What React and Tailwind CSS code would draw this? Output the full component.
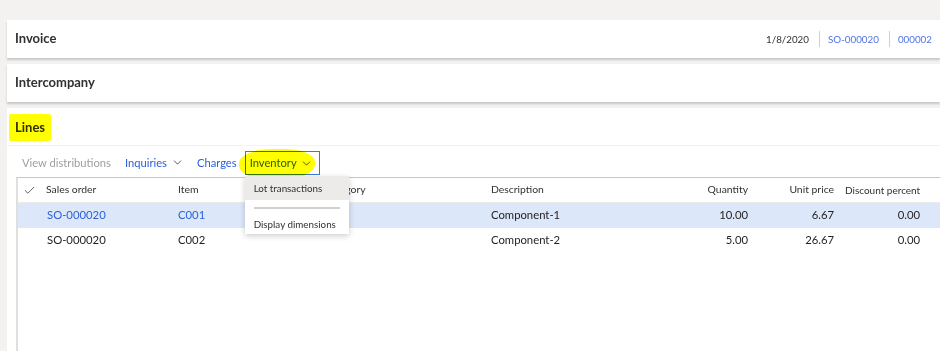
import React from 'react';
import { Check, ChevronDown } from 'lucide-react';

const font = { fontFamily: '"Segoe UI", Lato, sans-serif' };

const rows = [
  { so: 'SO-000020', item: 'C001', desc: 'Component-1', qty: '10.00', price: '6.67', disc: '0.00', selected: true },
  { so: 'SO-000020', item: 'C002', desc: 'Component-2', qty: '5.00', price: '26.67', disc: '0.00' },
];

const Card = ({ title, children }) => (
  <div className="ml-[7px] h-[38px] bg-white shadow-[0_2px_2px_rgba(0,0,0,0.18)] flex items-center justify-between pl-[8px] pr-[8px]">
    <span className="text-[13px] font-bold text-[#323130]">{title}</span>
    {children}
  </div>
);

const App = () => {
  return (
    <div className="w-[940px] h-[351px] overflow-hidden bg-[#f3f2f1] pt-[20px] flex flex-col gap-[6px] text-[#201f1e] whitespace-nowrap" style={font}>
      <Card title="Invoice">
        <div className="flex items-center text-[9.8px]">
          <span className="text-[#323130]">1/8/2020</span>
          <span className="w-px h-[16px] bg-[#d2d0ce] ml-[10px] mr-[8px]"></span>
          <span className="text-[#4f72e3]">SO-000020</span>
          <span className="w-px h-[16px] bg-[#d2d0ce] ml-[10px] mr-[8px]"></span>
          <span className="text-[#4f72e3]">000002</span>
        </div>
      </Card>
      <Card title="Intercompany" />

      <div className="ml-[7px] flex-1 bg-white flex flex-col">
        <div className="h-[38px] flex items-center pl-[8px] pt-[3px] border-b border-[#f3f2f1]">
          <span className="relative text-[13px] font-bold text-[#323130]">
            Lines
            <span className="absolute left-[-6px] right-[-6px] top-[-4px] bottom-[-3px] bg-[#ffff00] mix-blend-multiply rounded-[2px]"></span>
          </span>
        </div>

        <div className="h-[28px] mt-[3px] flex items-center pl-[15px] text-[11.2px]">
          <span className="text-[#a19f9d]">View distributions</span>
          <span className="ml-[14px] flex items-center text-[#2b62d9]">
            Inquiries
            <ChevronDown size={13} strokeWidth={1.5} className="ml-[4px] text-[#323130]" />
          </span>
          <span className="ml-[13px] text-[#2b62d9]">Charges</span>
          <div className="relative ml-[8px] h-[24px] w-[75px] border border-[#3b7ad9] flex items-center pl-[4px] text-[#2b62d9]">
            Inventory
            <ChevronDown size={13} strokeWidth={1.5} className="ml-[3px] text-[#323130]" />
            <span className="absolute left-[-7px] right-[4px] top-[-3px] bottom-[-6px] bg-[#ffff00] mix-blend-multiply rounded-[45%_40%_50%_45%]"></span>

            <div className="absolute left-[-1px] top-[24px] z-10 w-[104px] bg-white shadow-[0_2px_6px_rgba(0,0,0,0.2)] text-[9.8px] text-[#323130]">
              <div className="h-[24px] bg-[#edebe9] flex items-center pl-[9px]">Lot transactions</div>
              <div className="h-[15px] flex items-center px-[9px]">
                <div className="w-full h-[2px] bg-[#d2d0ce]"></div>
              </div>
              <div className="h-[18px] flex items-center pl-[9px] mb-[1px]">Display dimensions</div>
            </div>
          </div>
        </div>

        <div className="ml-[9px] flex-1 border-l-2 border-[#e1dfdd] border-t border-t-[#c8c6c4]">
          <div className="h-[25px] flex items-center text-[10.4px] text-[#323130] border-b border-[#edebe9]">
            <div className="w-[22px] flex justify-start pl-[5px]">
              <Check size={13} strokeWidth={1.4} />
            </div>
            <div className="w-[133px] pl-[6px]">Sales order</div>
            <div className="w-[146px] pl-[5px]">Item</div>
            <div className="w-[167px] pl-[5px]">Category</div>
            <div className="w-[174px] pl-[5px]">Description</div>
            <div className="w-[93px] pr-[5px] text-right">Quantity</div>
            <div className="w-[86px] pr-[5px] text-right">Unit price</div>
            <div className="w-[86px] pl-[6px] text-[10px]">Discount percent</div>
          </div>
          {rows.map((r, i) => (
            <div key={i} className={`h-[25px] flex items-center text-[11.3px] ${r.selected ? 'bg-[#dce7f9]' : ''}`}>
              <div className="w-[22px]"></div>
              <div className={`w-[133px] pl-[7px] ${r.selected ? 'text-[#2b62d9]' : ''}`}>{r.so}</div>
              <div className={`w-[146px] pl-[5px] ${r.selected ? 'text-[#2b62d9]' : ''}`}>{r.item}</div>
              <div className="w-[167px] pl-[5px]"></div>
              <div className="w-[174px] pl-[5px]">{r.desc}</div>
              <div className="w-[93px] pr-[5px] text-right">{r.qty}</div>
              <div className="w-[86px] pr-[5px] text-right">{r.price}</div>
              <div className="w-[86px] pr-[5px] text-right">{r.disc}</div>
            </div>
          ))}
        </div>
      </div>
    </div>
  );
};

export default App;
